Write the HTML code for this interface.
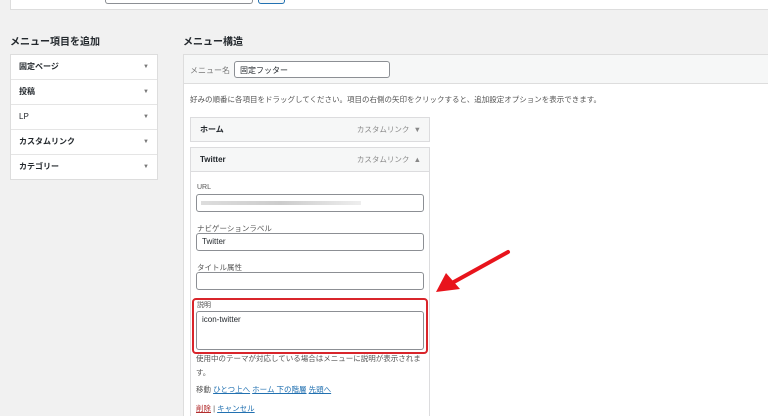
<!DOCTYPE html><html><head><meta charset="utf-8"><style>
html,body{margin:0;width:768px;height:416px;overflow:hidden}
body{background:#f1f1f1;font-family:"Liberation Sans","Noto Sans CJK JP",sans-serif;color:#23282d;position:relative}
.a{position:absolute;box-sizing:border-box}
.w{background:#fff;border:1px solid #ddd}
.t{font-size:8px;color:#555}
.in{background:#fff;border:1px solid #8c8f94;border-radius:3px}
.row{height:25px;box-sizing:border-box;border-bottom:1px solid #e5e5e5;font-size:8px;font-weight:bold;padding:0 8px;line-height:24px;position:relative}
.row span{position:absolute;right:8px;font-size:6px;color:#777}
a{color:#2271b1;text-decoration:underline}
</style></head><body>
<div class="a w" style="left:10px;top:0;width:758px;height:10px;border-top:0;border-right:0"></div>
<div class="a in" style="left:105px;top:0;width:148px;height:4px;border-top:0;border-radius:0 0 3px 3px"></div>
<div class="a" style="left:258px;top:0;width:27px;height:4px;border:1px solid #2271b1;border-top:0;border-radius:0 0 3px 3px;background:#f6f7f7"></div>
<div class="a" style="left:10px;top:33px;font-size:10px;font-weight:bold">メニュー項目を追加</div>
<div class="a" style="left:183px;top:33px;font-size:10px;font-weight:bold">メニュー構造</div>
<div class="a w" style="left:10px;top:54px;width:148px;height:126px">
<div class="row">固定ページ<span>▼</span></div><div class="row">投稿<span>▼</span></div><div class="row" style="font-weight:normal">LP<span>▼</span></div><div class="row">カスタムリンク<span>▼</span></div><div class="row" style="border:0">カテゴリー<span>▼</span></div></div>
<div class="a w" style="left:183px;top:54px;width:585px;height:362px;background:#fff;border-right:0;border-bottom:0"></div>
<div class="a" style="left:184px;top:55px;width:584px;height:29px;background:#f6f7f7;border-bottom:1px solid #ddd"></div>
<div class="a t" style="left:190px;top:65px;color:#777">メニュー名</div>
<div class="a in" style="left:234px;top:61px;width:156px;height:17px;font-size:8px;padding:3px 5px">固定フッター</div>
<div class="a t" style="left:190px;top:94px;font-size:7.5px">好みの順番に各項目をドラッグしてください。項目の右側の矢印をクリックすると、追加設定オプションを表示できます。</div>
<div class="a" style="left:190px;top:117px;width:240px;height:25px;background:#f6f7f7;border:1px solid #dcdcde;font-size:8px;font-weight:bold;line-height:23px;padding-left:9px">ホーム<span style="position:absolute;right:8px;font-weight:normal;color:#888;font-size:7.5px">カスタムリンク &nbsp;▼</span></div>
<div class="a" style="left:190px;top:147px;width:240px;height:269px;background:#fff;border:1px solid #dcdcde;border-bottom:0"></div>
<div class="a" style="left:190px;top:147px;width:240px;height:25px;background:#f6f7f7;border:1px solid #dcdcde;font-size:8px;font-weight:bold;line-height:23px;padding-left:9px">Twitter<span style="position:absolute;right:8px;font-weight:normal;color:#888;font-size:7.5px">カスタムリンク &nbsp;▲</span></div>
<div class="a t" style="left:197px;top:184px;font-size:7px">URL</div>
<div class="a in" style="left:196px;top:194px;width:228px;height:18px"><div style="margin:6px 4px;width:160px;height:4px;background:linear-gradient(90deg,#ddd,#ccc,#eee)"></div></div>
<div class="a t" style="left:197px;top:223px;font-size:7.5px">ナビゲーションラベル</div>
<div class="a in" style="left:196px;top:233px;width:228px;height:18px;font-size:8px;padding:3px 5px">Twitter</div>
<div class="a t" style="left:197px;top:262px;font-size:7.5px">タイトル属性</div>
<div class="a in" style="left:196px;top:272px;width:228px;height:18px"></div>
<div class="a" style="left:192px;top:298px;width:236px;height:56px;border:2px solid #d9252b;border-radius:4px"></div>
<div class="a t" style="left:197px;top:300px;font-size:7px">説明</div>
<div class="a in" style="left:196px;top:311px;width:228px;height:39px;font-size:8px;padding:3px 5px">icon-twitter</div>
<div class="a t" style="left:196px;top:352px;font-size:7.5px;width:232px;line-height:14px">使用中のテーマが対応している場合はメニューに説明が表示されます。</div>
<div class="a t" style="left:196px;top:384px;font-size:7.5px">移動 <a>ひとつ上へ</a> <a>ホーム 下の階層</a> <a>先頭へ</a></div>
<div class="a t" style="left:196px;top:404px;font-size:7.5px;line-height:10px"><a style="color:#b32d2e">削除</a> | <a>キャンセル</a></div>
<svg class="a" style="left:430px;top:245px" width="85" height="55"><path d="M78 7 L22 38" stroke="#e8141c" stroke-width="4" stroke-linecap="round"/><path d="M6 47 L16 28 L30 44 Z" fill="#e8141c"/></svg>
</body></html>
